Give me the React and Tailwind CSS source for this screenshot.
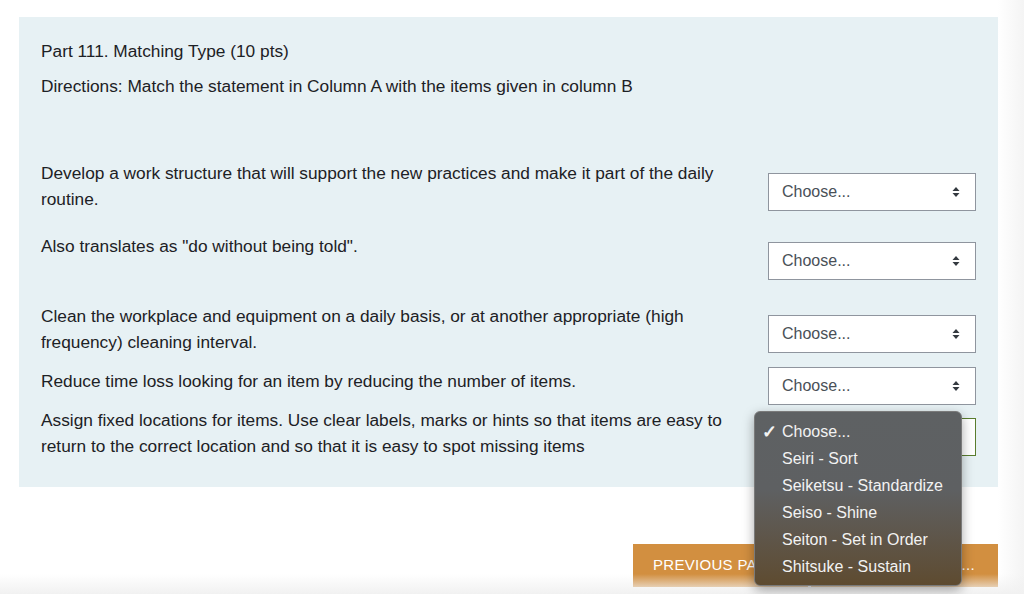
import React from 'react';

const rows = [
    { text: 'Develop a work structure that will support the new practices and make it part of the daily routine.', mt: 'mt-[61px]', sel: 'mt-[13px]' },
    { text: 'Also translates as "do without being told".', mt: 'mt-[21px]', sel: 'mt-[9px]' },
    { text: 'Clean the workplace and equipment on a daily basis, or at another appropriate (high frequency) cleaning interval.', mt: 'mt-[23px]', sel: 'mt-[12px]' },
    { text: 'Reduce time loss looking for an item by reducing the number of items.', mt: 'mt-[11px]', sel: 'mt-px', textMt: 'mt-[2px]' },
    { text: 'Assign fixed locations for items. Use clear labels, marks or hints so that items are easy to return to the correct location and so that it is easy to spot missing items', mt: 'mt-[2px]', sel: 'mt-[11px]', open: true },
];

const options = ['Choose...', 'Seiri - Sort', 'Seiketsu - Standardize', 'Seiso - Shine', 'Seiton - Set in Order', 'Shitsuke - Sustain'];

const Arrows = () => (
    <svg width="8" height="12" viewBox="0 0 8 12" className="text-[#343a40]">
        <path d="M4 1 L7.5 5 H0.5 Z" fill="currentColor" />
        <path d="M4 11 L7.5 7 H0.5 Z" fill="currentColor" />
    </svg>
);

const Select = ({ open }) => (
    <div className="relative">
        <div className={`w-[208px] h-[38px] bg-white border flex items-center justify-between pl-[13px] pr-[15px] text-[16px] text-[#495057] ${open ? 'border-[#5a7d2e]' : 'border-[#8f959e]'}`}>
            <span>Choose...</span>
            <Arrows />
        </div>
        {open && (
            <div className="absolute left-[-14px] top-[-7px] w-[208px] rounded-[6px] border border-[#7a7a7a] shadow-[0_4px_12px_rgba(0,0,0,0.35)] bg-gradient-to-b from-[#5e6163] via-[#5e6062] via-45% to-[#5e4b30] pt-[6px] pb-[5px] z-10">
                {options.map((o, i) => (
                    <div key={o} className="h-[27px] flex items-center text-[16px] text-[#f2f2f2]">
                        <span className="w-[27px] pl-[7px] text-[18px] font-bold leading-none">{i === 0 ? '✓' : ''}</span>
                        <span>{o}</span>
                    </div>
                ))}
            </div>
        )}
    </div>
);

export default function App() {
    return (
        <div className="relative w-[1024px] h-[594px] overflow-hidden bg-white flex font-['Liberation_Sans',Arial,sans-serif]">
            <div className="w-[998px] pt-[17px] pl-[19px]">
                <div className="w-[979px] h-[470px] bg-[#e7f1f4] pl-[22px] pt-[21px] text-[17.3px] leading-[26px] text-[#1d2125]">
                    <p>Part 111. Matching Type (10 pts)</p>
                    <p className="mt-[9px]">Directions: Match the statement in Column A with the items given in column B</p>
                    {rows.map((r, i) => (
                        <div key={i} className={`flex items-start ${r.mt}`}>
                            <p className={`w-[700px] ${r.textMt || ''}`}>{r.text}</p>
                            <div className={`ml-[27px] ${r.sel}`}>
                                <Select open={r.open} />
                            </div>
                        </div>
                    ))}
                </div>
                <div className="flex justify-end mt-[57px]">
                    <button className="h-[43px] w-[175px] bg-[#d28f40] text-white text-[15px] text-left pl-[20px] tracking-[0.3px]">PREVIOUS PAGE</button>
                    <button className="ml-[3px] h-[43px] w-[187px] bg-[#d28f40] text-white text-[15px] text-right pr-[23px] tracking-[0.3px]">FINISH ATTEMPT ...</button>
                </div>
            </div>
            <div className="w-[26px] bg-gradient-to-r from-white to-[#f4f4f4]"></div>
            <div className="absolute left-0 right-0 bottom-0 h-[20px] bg-gradient-to-b from-transparent to-[#f1f1f1] pointer-events-none"></div>
        </div>
    );
}
